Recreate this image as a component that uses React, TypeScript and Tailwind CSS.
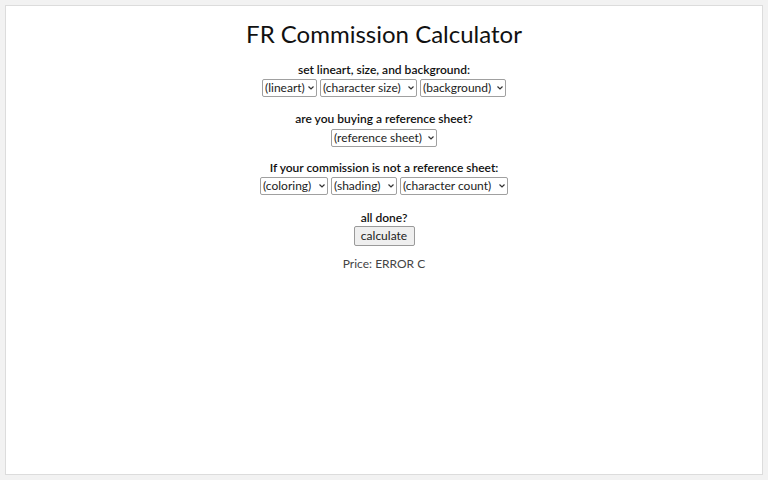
import React from "react";

function Select({ label, w }: { label: string; w: string }) {
  return (
    <div className={`relative h-[18px] ${w}`}>
      <select
        className="block h-full w-full appearance-none rounded-[2px] border border-[#a0a0a0] bg-white pl-[2px] pr-[10px] text-[12px] leading-none text-[#222]"
        defaultValue=""
      >
        <option value="">{label}</option>
      </select>
      <svg
        className="pointer-events-none absolute right-[3px] top-[7px]"
        width="6"
        height="4"
        viewBox="0 0 6 4"
      >
        <path d="M0.5 0.5 L3 3 L5.5 0.5" fill="none" stroke="#333" strokeWidth="1.2" />
      </svg>
    </div>
  );
}

export default function App() {
  return (
    <div className="h-[480px] w-[768px] bg-[#f2f2f2] p-[5px] font-['Lato','Liberation_Sans',sans-serif]">
      <div className="flex h-full flex-col items-center border border-[#dcdcdc] bg-white text-[#111]">
        <h1 className="mt-[13px] text-[24px] leading-[30px]">FR Commission Calculator</h1>

        <p className="mt-[14px] text-[12px] font-semibold leading-[14px]">set lineart, size, and background:</p>
        <div className="mt-[2px] flex gap-[3px]">
          <Select label="(lineart)" w="w-[55px]" />
          <Select label="(character size)" w="w-[97px]" />
          <Select label="(background)" w="w-[86px]" />
        </div>

        <p className="mt-[15px] text-[12px] font-semibold leading-[14px]">are you buying a reference sheet?</p>
        <div className="mt-[3px] flex">
          <Select label="(reference sheet)" w="w-[106px]" />
        </div>

        <p className="mt-[14px] text-[12px] font-semibold leading-[14px]">If your commission is not a reference sheet:</p>
        <div className="mt-[2px] flex gap-[3px]">
          <Select label="(coloring)" w="w-[68px]" />
          <Select label="(shading)" w="w-[66px]" />
          <Select label="(character count)" w="w-[108px]" />
        </div>

        <p className="mt-[16px] text-[12px] font-semibold leading-[14px]">all done?</p>
        <button className="mt-[1px] h-[20px] w-[61px] rounded-[2px] border border-[#9a9a9a] bg-[#efefef] text-[12px] leading-none text-[#222]">
          calculate
        </button>

        <p className="mt-[11px] text-[12px] leading-[14px] text-[#444]">Price: ERROR C</p>
      </div>
    </div>
  );
}
